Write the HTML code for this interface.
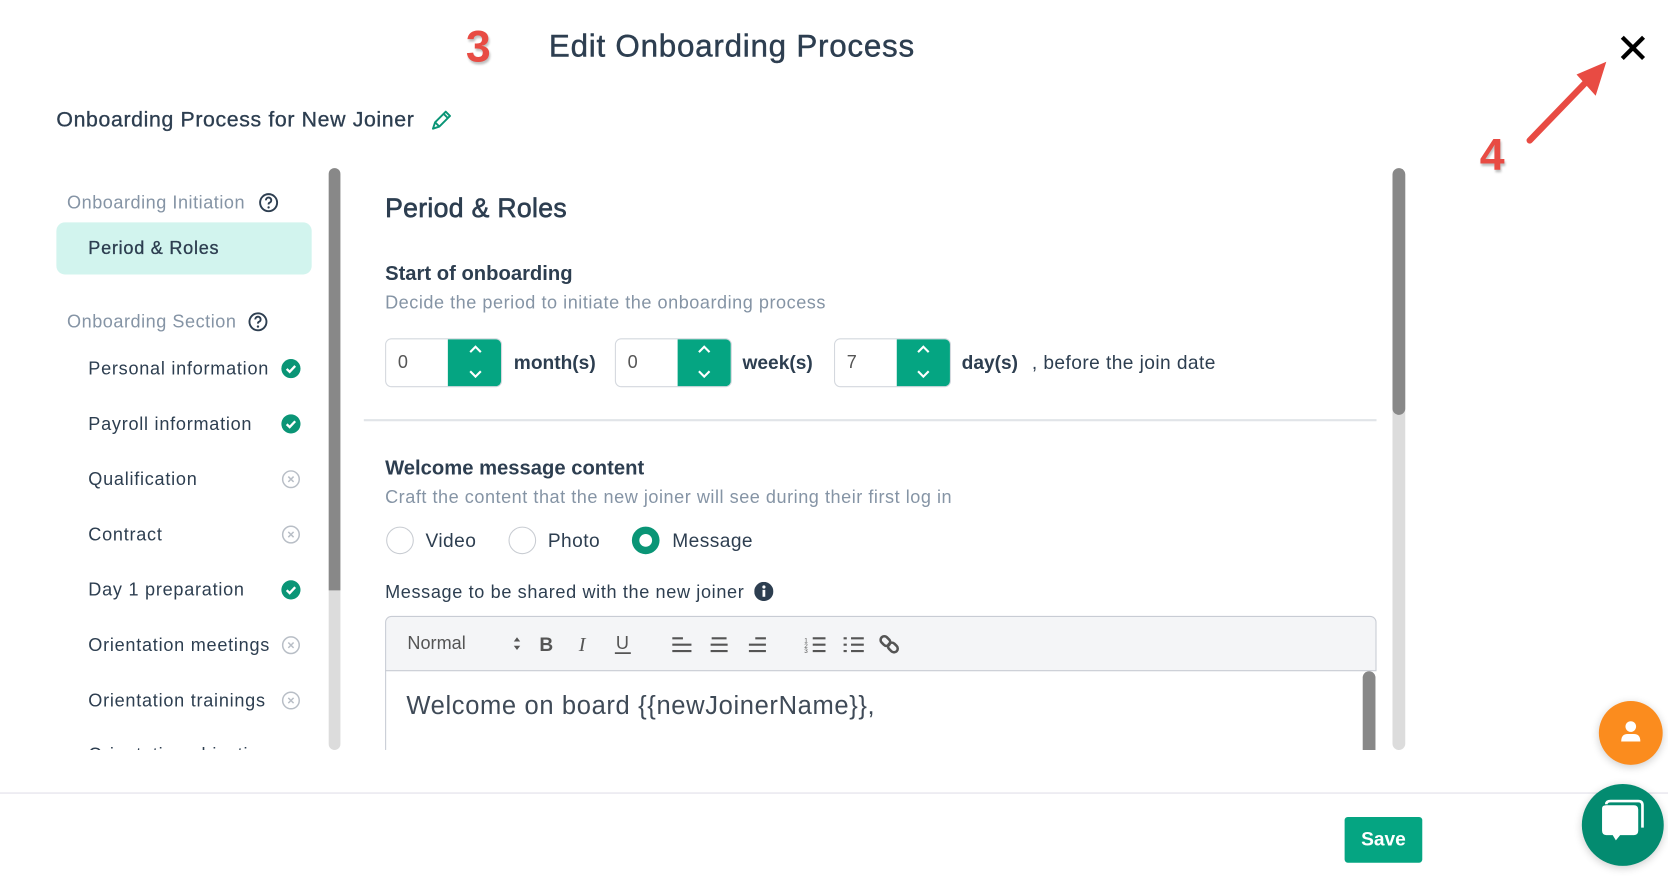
<!DOCTYPE html>
<html><head><meta charset="utf-8"><style>
html,body{margin:0;padding:0;background:#fff;overflow:hidden}
body{width:1668px;height:876px;position:relative;font-family:"Liberation Sans",Arial,sans-serif;color:#2d3e50}
#w{position:absolute;left:0;top:0;width:1568px;height:824px;transform:scale(1.06378);transform-origin:0 0}
.a{position:absolute;white-space:nowrap}
.side{font-size:17px;color:#2d3e50;letter-spacing:.7px}
.sub{font-size:17px;color:#8594a5;letter-spacing:.5px}
.inp{position:absolute;top:318px;height:46px;width:110px;border:1px solid #d4d8de;border-radius:6px;box-sizing:border-box;overflow:hidden}
.inp span{position:absolute;left:11px;top:12px;font-size:17px;color:#555}
.inp .g{position:absolute;right:0;top:-1px;width:50px;height:46px;background:#05a582}
.lbl{font-size:18px;font-weight:bold;color:#2d3e50;top:331px}
.rad{position:absolute;top:495px;width:24px;height:24px;border:1.5px solid #c8ccd2;border-radius:50%}
.t18{font-size:18px;letter-spacing:.4px}
</style></head><body><div id="w">
<div class="a" style="left:438px;top:20px;font-size:42px;font-weight:bold;color:#e84b43;text-shadow:1px 2px 2px rgba(0,0,0,.25)">3</div>
<div class="a" style="left:516px;top:27px;font-size:29.5px;color:#2d3e50;letter-spacing:.7px;-webkit-text-stroke:.4px #2d3e50">Edit Onboarding Process</div>
<svg class="a" style="left:1520px;top:30px" width="30" height="30" viewBox="0 0 30 30"><path d="M5 5L25 25M25 5L5 25" stroke="#000" stroke-width="4"/></svg>
<svg class="a" style="left:1430px;top:52px" width="90" height="90" viewBox="0 0 90 90"><path d="M8 80L66 20" stroke="#e84b43" stroke-width="6" stroke-linecap="round"/><path d="M80 6L52 18L70 38Z" fill="#e84b43"/></svg>
<div class="a" style="left:1391px;top:122px;font-size:42px;font-weight:bold;color:#e84b43;text-shadow:1px 2px 2px rgba(0,0,0,.25)">4</div>
<div class="a" style="left:53px;top:102px;font-size:20px;letter-spacing:.6px;-webkit-text-stroke:.3px #2d3e50">Onboarding Process for New Joiner</div>
<svg class="a" style="left:404px;top:102px" width="22" height="22" viewBox="0 0 22 22"><path d="M3 19L5 13L15 3L19 7L9 17Z M13 5L17 9 M5 13L9 17" stroke="#0a9576" stroke-width="1.8" fill="none" stroke-linejoin="round"/></svg>

<div class="a sub" style="left:63px;top:181px">Onboarding Initiation</div>
<svg class="a" style="left:243px;top:181px" width="19" height="19" viewBox="0 0 19 19"><circle cx="9.5" cy="9.5" r="8" stroke="#2d3e50" stroke-width="1.8" fill="none"/><path d="M7 7.3a2.5 2.5 0 1 1 3.3 2.3c-.7.3-.8.8-.8 1.6" stroke="#2d3e50" stroke-width="1.8" fill="none"/><circle cx="9.5" cy="14" r="1.1" fill="#2d3e50"/></svg>
<div class="a" style="left:53px;top:209px;width:240px;height:49px;background:#d2f4ee;border-radius:8px"></div>
<div class="a side" style="left:83px;top:224px;-webkit-text-stroke:.3px #2d3e50">Period &amp; Roles</div>
<div class="a sub" style="left:63px;top:293px">Onboarding Section</div>
<svg class="a" style="left:233px;top:293px" width="19" height="19" viewBox="0 0 19 19"><circle cx="9.5" cy="9.5" r="8" stroke="#2d3e50" stroke-width="1.8" fill="none"/><path d="M7 7.3a2.5 2.5 0 1 1 3.3 2.3c-.7.3-.8.8-.8 1.6" stroke="#2d3e50" stroke-width="1.8" fill="none"/><circle cx="9.5" cy="14" r="1.1" fill="#2d3e50"/></svg>

<div class="a side" style="left:83px;top:337px">Personal information</div>
<div class="a side" style="left:83px;top:389px">Payroll information</div>
<div class="a side" style="left:83px;top:441px">Qualification</div>
<div class="a side" style="left:83px;top:493px">Contract</div>
<div class="a side" style="left:83px;top:545px">Day 1 preparation</div>
<div class="a side" style="left:83px;top:597px">Orientation meetings</div>
<div class="a side" style="left:83px;top:649px">Orientation trainings</div>
<div class="a side" style="left:83px;top:700px;height:5px;overflow:hidden">Orientation objectives</div>
<svg class="a" style="left:264px;top:337px" width="19" height="380" viewBox="0 0 19 380">
<g><circle cx="9.5" cy="9.5" r="9" fill="#0a9576"/><path d="M5.5 9.8L8.3 12.5L13.5 7" stroke="#fff" stroke-width="2.2" fill="none"/></g>
<g transform="translate(0,52)"><circle cx="9.5" cy="9.5" r="9" fill="#0a9576"/><path d="M5.5 9.8L8.3 12.5L13.5 7" stroke="#fff" stroke-width="2.2" fill="none"/></g>
<g transform="translate(0,104)"><circle cx="9.5" cy="9.5" r="7.8" stroke="#b8bec6" stroke-width="1.4" fill="none"/><path d="M7 7L12 12M12 7L7 12" stroke="#b8bec6" stroke-width="1.4"/></g>
<g transform="translate(0,156)"><circle cx="9.5" cy="9.5" r="7.8" stroke="#b8bec6" stroke-width="1.4" fill="none"/><path d="M7 7L12 12M12 7L7 12" stroke="#b8bec6" stroke-width="1.4"/></g>
<g transform="translate(0,208)"><circle cx="9.5" cy="9.5" r="9" fill="#0a9576"/><path d="M5.5 9.8L8.3 12.5L13.5 7" stroke="#fff" stroke-width="2.2" fill="none"/></g>
<g transform="translate(0,260)"><circle cx="9.5" cy="9.5" r="7.8" stroke="#b8bec6" stroke-width="1.4" fill="none"/><path d="M7 7L12 12M12 7L7 12" stroke="#b8bec6" stroke-width="1.4"/></g>
<g transform="translate(0,312)"><circle cx="9.5" cy="9.5" r="7.8" stroke="#b8bec6" stroke-width="1.4" fill="none"/><path d="M7 7L12 12M12 7L7 12" stroke="#b8bec6" stroke-width="1.4"/></g>
</svg>
<div class="a" style="left:264px;top:705px;width:20px;height:15px;background:#fff"></div>
<div class="a" style="left:309px;top:158px;width:11px;height:547px;background:#dcdcdc;border-radius:6px"></div>
<div class="a" style="left:309px;top:158px;width:11px;height:397px;background:#888;border-radius:6px 6px 0 0"></div>

<div class="a" style="left:362px;top:182px;font-size:25px;letter-spacing:.3px;-webkit-text-stroke:.6px #2d3e50">Period &amp; Roles</div>
<div class="a" style="left:362px;top:247px;font-size:19px;font-weight:bold">Start of onboarding</div>
<div class="a sub" style="left:362px;top:275px">Decide the period to initiate the onboarding process</div>
<div class="inp" style="left:362px"><span>0</span><div class="g"></div></div>
<div class="inp" style="left:578px"><span>0</span><div class="g"></div></div>
<div class="inp" style="left:784px"><span>7</span><div class="g"></div></div>
<svg class="a" style="left:440px;top:322px" width="14" height="38" viewBox="0 0 14 38"><path d="M2 9L7 4L12 9M2 27L7 32L12 27" stroke="#fff" stroke-width="2" fill="none"/></svg>
<svg class="a" style="left:655px;top:322px" width="14" height="38" viewBox="0 0 14 38"><path d="M2 9L7 4L12 9M2 27L7 32L12 27" stroke="#fff" stroke-width="2" fill="none"/></svg>
<svg class="a" style="left:861px;top:322px" width="14" height="38" viewBox="0 0 14 38"><path d="M2 9L7 4L12 9M2 27L7 32L12 27" stroke="#fff" stroke-width="2" fill="none"/></svg>
<div class="a lbl" style="left:483px">month(s)</div>
<div class="a lbl" style="left:698px">week(s)</div>
<div class="a lbl" style="left:904px">day(s)</div>
<div class="a t18" style="left:970px;top:331px">, before the join date</div>
<div class="a" style="left:342px;top:394px;width:952px;height:2px;background:#e1e4e8"></div>

<div class="a" style="left:362px;top:430px;font-size:19px;font-weight:bold">Welcome message content</div>
<div class="a sub" style="left:362px;top:458px">Craft the content that the new joiner will see during their first log in</div>
<div class="rad" style="left:363px"></div>
<div class="a t18" style="left:400px;top:498px">Video</div>
<div class="rad" style="left:478px"></div>
<div class="a t18" style="left:515px;top:498px">Photo</div>
<div class="rad" style="left:594px;border:7.5px solid #0a9576;width:12px;height:12px"></div>
<div class="a t18" style="left:632px;top:498px">Message</div>
<div class="a" style="left:362px;top:547px;font-size:17px;letter-spacing:.6px">Message to be shared with the new joiner</div>
<svg class="a" style="left:709px;top:547px" width="18" height="18" viewBox="0 0 18 18"><circle cx="9" cy="9" r="9" fill="#2d3e50"/><rect x="7.8" y="7.5" width="2.6" height="6.5" fill="#fff"/><circle cx="9.1" cy="4.8" r="1.5" fill="#fff"/></svg>

<div class="a" style="left:362px;top:579px;width:932px;height:52px;background:#f4f5f7;border:1px solid #c8ccd4;border-radius:6px 6px 0 0;box-sizing:border-box"></div>
<div class="a" style="left:362px;top:630px;width:1px;height:75px;background:#c8ccd4"></div>
<div class="a" style="left:383px;top:595px;font-size:17px;color:#555">Normal</div>
<svg class="a" style="left:480px;top:596px" width="370" height="20" viewBox="0 0 370 20">
<path d="M3 7L6 3L9 7ZM3 11L6 15L9 11Z" fill="#555"/>
<text x="27" y="16" font-family="Liberation Sans" font-weight="bold" font-size="18" fill="#555">B</text>
<text x="64" y="16" font-family="Liberation Serif" font-style="italic" font-size="19" fill="#555">I</text>
<text x="99" y="14" font-family="Liberation Sans" font-size="17" fill="#555">U</text><path d="M98 18H113" stroke="#555" stroke-width="1.6"/>
<g stroke="#555" stroke-width="2"><path d="M152 4H162M152 10H170M152 16H170"/><path d="M189 4H203M188 10H204M188 16H204"/><path d="M230 4H240M224 10H240M224 16H240"/>
<path d="M284 4H296M284 10H296M284 16H296"/><path d="M320 4H332M320 10H332M320 16H332M313 4H316M313 10H316M313 16H316"/></g>
<text x="276" y="8" font-size="6" fill="#555">1</text><text x="276" y="13" font-size="6" fill="#555">2</text><text x="276" y="18" font-size="6" fill="#555">3</text>
<g stroke="#555" stroke-width="2.4" fill="none"><rect x="349" y="2" width="7" height="10" rx="3.5" transform="rotate(-45 352 7)"/><rect x="356" y="8" width="7" height="10" rx="3.5" transform="rotate(-45 359 13)"/></g>
</svg>
<div class="a" style="left:382px;top:650px;font-size:24px;color:#3f4a57;letter-spacing:.6px">Welcome on board {{newJoinerName}},</div>
<div class="a" style="left:1281px;top:631px;width:12px;height:74px;background:#888;border-radius:6px 6px 0 0"></div>

<div class="a" style="left:1309px;top:158px;width:12px;height:547px;background:#dcdcdc;border-radius:6px"></div>
<div class="a" style="left:1309px;top:158px;width:12px;height:232px;background:#888;border-radius:6px"></div>

<div class="a" style="left:0;top:745px;width:1568px;height:1px;background:#e0dfe8"></div>
<div class="a" style="left:1264px;top:768px;width:73px;height:43px;background:#05a582;border-radius:3px;color:#fff;font-weight:bold;font-size:18px;text-align:center;line-height:43px">Save</div>
<div class="a" style="left:1503px;top:659px;width:60px;height:60px;border-radius:50%;background:#fb8c1e;box-shadow:0 2px 8px rgba(0,0,0,.2)"></div>
<svg class="a" style="left:1518px;top:673px" width="30" height="30" viewBox="0 0 30 30"><circle cx="15" cy="10" r="5" fill="#fff"/><path d="M6 24Q6 17 12 17H18Q24 17 24 24Z" fill="#fff"/></svg>
<div class="a" style="left:1487px;top:737px;width:77px;height:77px;border-radius:50%;background:#038b70;box-shadow:0 2px 8px rgba(0,0,0,.2)"></div>
<svg class="a" style="left:1500px;top:750px" width="50" height="50" viewBox="0 0 50 50"><path d="M10 6Q10 3 14 3H40Q44 3 44 7V28" stroke="#fff" stroke-width="2.5" fill="none"/><path d="M6 10Q6 7 10 7H36Q40 7 40 11V31Q40 35 36 35H23L19 40L16 35H10Q6 35 6 31Z" fill="#fff"/></svg>
</div></body></html>
